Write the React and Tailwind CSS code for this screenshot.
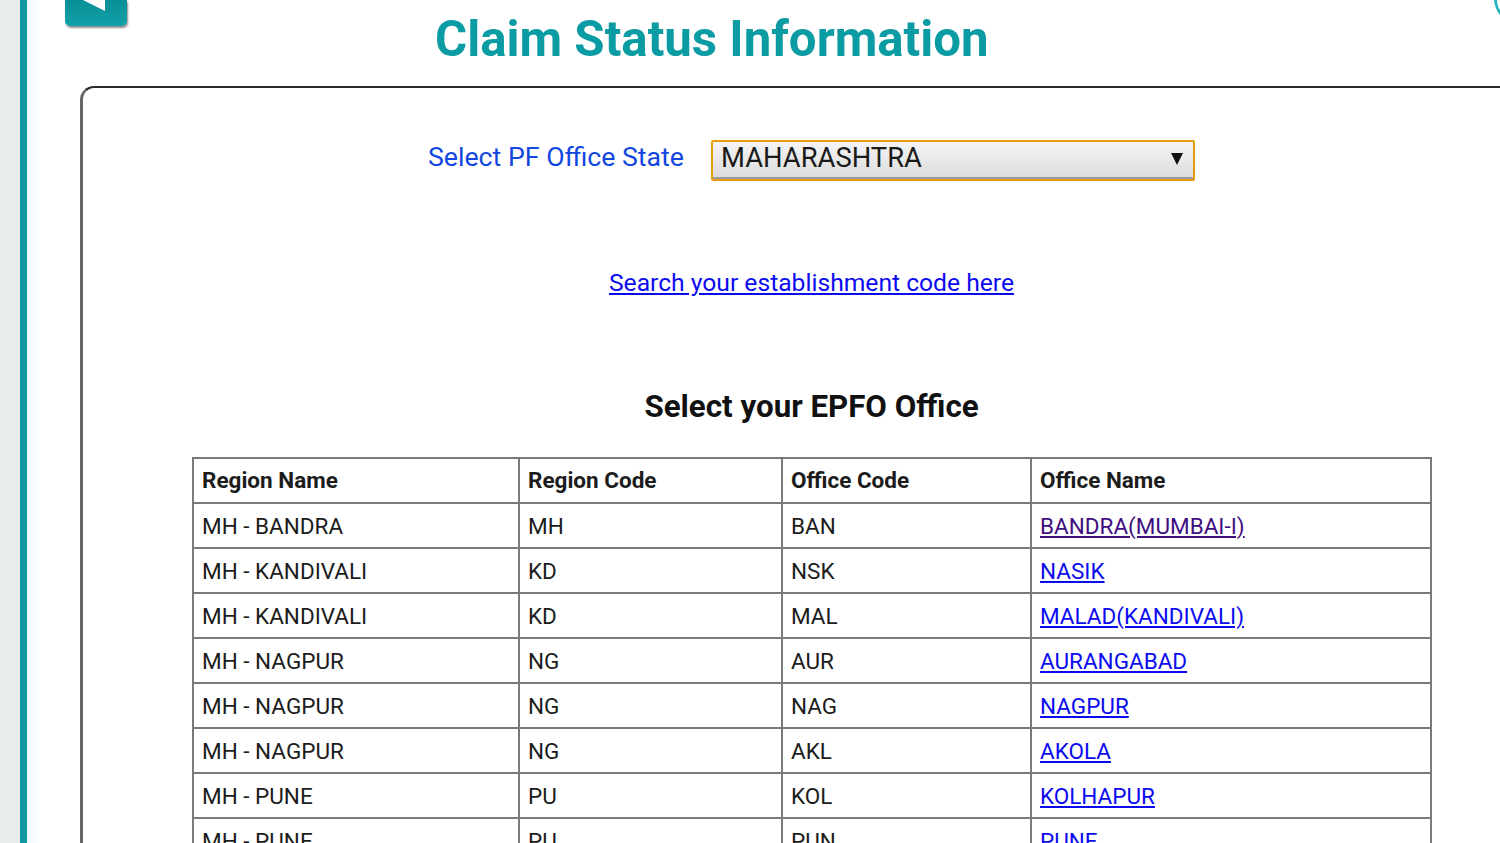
const ROWS = [
  ['MH - BANDRA', 'MH', 'BAN', 'BANDRA(MUMBAI-I)', true],
  ['MH - KANDIVALI', 'KD', 'NSK', 'NASIK'],
  ['MH - KANDIVALI', 'KD', 'MAL', 'MALAD(KANDIVALI)'],
  ['MH - NAGPUR', 'NG', 'AUR', 'AURANGABAD'],
  ['MH - NAGPUR', 'NG', 'NAG', 'NAGPUR'],
  ['MH - NAGPUR', 'NG', 'AKL', 'AKOLA'],
  ['MH - PUNE', 'PU', 'KOL', 'KOLHAPUR'],
  ['MH - PUNE', 'PU', 'PUN', 'PUNE'],
]

function BackButton() {
  return (
    <div className="h-[26px] w-[62px] rounded-b-[5px] bg-gradient-to-b from-[#0a8f98] to-[#12a0a8] shadow-[1px_2px_2px_rgba(0,0,0,0.45)] overflow-hidden flex justify-center">
      <svg width="62" height="26" viewBox="0 0 62 26">
        <path d="M18 0 L40 0 L40 11 Z" fill="#fff" />
      </svg>
    </div>
  )
}

function OfficeTable() {
  return (
    <table className="w-[1238px] table-fixed border-collapse border-2 border-[#444] text-[22.5px] text-[#1c1c1c]">
      <colgroup>
        <col className="w-[326px]" />
        <col className="w-[263px]" />
        <col className="w-[249px]" />
        <col className="w-[400px]" />
      </colgroup>
      <thead>
        <tr className="h-[45px] font-bold">
          <th className="border-2 border-[#7a7a7a] px-2 pt-[1px] text-left font-bold">Region Name</th>
          <th className="border-2 border-[#7a7a7a] px-2 pt-[1px] text-left font-bold">Region Code</th>
          <th className="border-2 border-[#7a7a7a] px-2 pt-[1px] text-left font-bold">Office Code</th>
          <th className="border-2 border-[#7a7a7a] px-2 pt-[1px] text-left font-bold">Office Name</th>
        </tr>
      </thead>
      <tbody>
        {ROWS.map((row) => (
          <tr key={row[2]} className="h-[45px]">
            <td className="border-2 border-[#7a7a7a] px-2 pt-[2px]">{row[0]}</td>
            <td className="border-2 border-[#7a7a7a] px-2 pt-[2px]">{row[1]}</td>
            <td className="border-2 border-[#7a7a7a] px-2 pt-[2px]">{row[2]}</td>
            <td className="border-2 border-[#7a7a7a] px-2 pt-[2px]">
              <a href="#" className={row[4] ? 'underline text-[#3f0f7f]' : 'underline text-[#0b0bf0]'}>
                {row[3]}
              </a>
            </td>
          </tr>
        ))}
      </tbody>
    </table>
  )
}

export default function App() {
  return (
    <div className="flex h-[843px] w-full overflow-hidden bg-white font-['Roboto',sans-serif]">
      <div className="w-[20px] shrink-0 bg-[#e8ecec]" />
      <div className="w-[7px] shrink-0 bg-[#109aa0]" />
      <div className="relative w-[1473px] shrink-0 pl-[38px] bg-[linear-gradient(90deg,#eef9ff,#ffffff_14px)]">
        <svg className="absolute right-0 top-0" width="6" height="15" viewBox="0 0 6 15">
          <path d="M0 0 Q1 9 6 15 L6 10 Q3 6 3 0 Z" fill="#1fb4c0" />
        </svg>
        <div className="flex">
          <BackButton />
        </div>
        <h1 className="ml-[370px] mt-[-24px] h-[84px] text-[49.2px] leading-[75px] font-bold text-[#0b9ba3] whitespace-nowrap">
          Claim Status Information
        </h1>
        <div className="ml-[15px] w-[1460px] h-[800px] rounded-tl-[14px] border-t-2 border-l-[3px] border-t-[#2a2a2a] border-l-[#666] flex flex-col items-center">
          <div className="mt-[49px] flex items-center">
            <span className="pb-[7px] text-[26.7px] text-[#1246e0] whitespace-nowrap">Select PF Office State</span>
            <div className="ml-[27px] flex h-[41px] w-[484px] items-center justify-between rounded-[2px] border-2 border-[#e89b12] bg-gradient-to-b from-[#f4f4f4] to-[#dcdcdc] pl-[8px] pr-[9px] pb-[3px] text-[27.4px] text-[#1a1a1a] shadow-[inset_0_-2px_0_#9a9aa4]">
              <span>MAHARASHTRA</span>
              <svg width="14" height="14" viewBox="0 0 14 14"><path d="M1 1 H13 L7 13 Z" fill="#111" /></svg>
            </div>
          </div>
          <a href="#" className="mt-[81px] text-[24.65px] underline text-[#0b0bf0] whitespace-nowrap">
            Search your establishment code here
          </a>
          <h2 className="mt-[82px] text-[31.3px] font-bold text-[#111] whitespace-nowrap">Select your EPFO Office</h2>
          <div className="mt-[26px] ml-[1px]">
            <OfficeTable />
          </div>
        </div>
      </div>
    </div>
  )
}
